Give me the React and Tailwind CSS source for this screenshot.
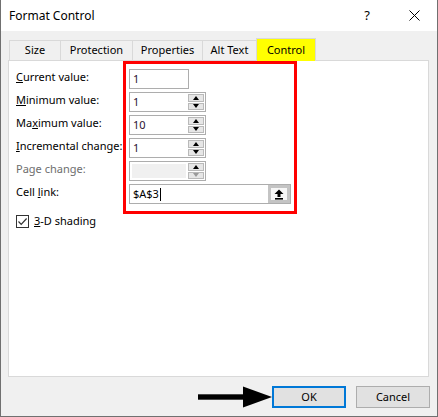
import React from 'react';

function UpArrow({dim}) {
    return (
        <span className={dim
            ? "block h-0 w-0 border-x-[3px] border-b-[4px] border-x-transparent border-b-[#9a9a9a]"
            : "block h-0 w-0 border-x-[3px] border-b-[4px] border-x-transparent border-b-black"}/>
    );
}

function DownArrow({dim}) {
    return (
        <span className={dim
            ? "block h-0 w-0 border-x-[3px] border-t-[4px] border-x-transparent border-t-[#9a9a9a]"
            : "block h-0 w-0 border-x-[3px] border-t-[4px] border-x-transparent border-t-black"}/>
    );
}

function Spinner({disabled}) {
    return (
        <div className="my-[1px] mr-[1px] flex w-[16px] flex-col gap-[1px]">
            <div className="flex flex-1 items-center justify-center border border-[#b9b9b9] bg-[#e6e6e6]">
                <UpArrow/>
            </div>
            <div className="flex flex-1 items-center justify-center border border-[#b9b9b9] bg-[#e6e6e6]">
                <DownArrow dim={disabled}/>
            </div>
        </div>
    );
}

function Row({label, children, disabled}) {
    return (
        <div className="flex h-[20px] items-start">
            <div className={disabled ? "w-[113px] leading-[15px] text-[#6d6d6d]" : "w-[113px] leading-[15px]"}>
                {label}
            </div>
            {children}
        </div>
    );
}

function SpinBox({value, disabled}) {
    return (
        <div className="flex h-[20px] w-[77px] border border-[#adadad] bg-white">
            {disabled
                ? <div className="m-[2px] flex-1 bg-[#f0f0f0]"/>
                : <div className="flex-1 pl-[3px] leading-[18px] text-[#2a1230]">{value}</div>}
            <Spinner disabled={disabled}/>
        </div>
    );
}

const tabs = [
    {name: 'Size', w: 'w-[51px]'},
    {name: 'Protection', w: 'w-[72px]'},
    {name: 'Properties', w: 'w-[70px]'},
    {name: 'Alt Text', w: 'w-[54px]'},
];

export default function App() {
    return (
        <div className="flex h-[417px] w-[438px] flex-col border-x border-b border-[#707070] font-['Noto_Sans',sans-serif] text-[11px] text-black">
            {/* title bar */}
            <div className="flex h-[31px] items-center bg-white pl-[8px]">
                <span className="flex-1 text-[12px]">Format Control</span>
                <span className="mr-[39px] text-[13px]">?</span>
                <svg width="11" height="11" viewBox="0 0 11 11" className="mr-[17px]">
                    <path d="M0.5 0.5 L10.5 10.5 M10.5 0.5 L0.5 10.5" stroke="#000" strokeWidth="1"/>
                </svg>
            </div>

            {/* body */}
            <div className="flex flex-1 flex-col bg-[#f0f0f0] pl-[7px] pr-[7px] pt-[7px]">
                {/* tabs */}
                <div className="flex h-[22px] items-end pl-[1px]">
                    {tabs.map(t => (
                        <div key={t.name}
                             className={`flex h-[20px] items-center justify-center border-l border-t border-[#d9d9d9] ${t.w}`}>
                            {t.name}
                        </div>
                    ))}
                    <div className="relative z-10 -mb-px flex h-[23px] w-[60px] items-center justify-center border-x border-t border-[#d9d9d9] bg-[#ffff00]">
                        Control
                    </div>
                </div>

                {/* panel */}
                <div className="relative mr-[1px] flex h-[317px] flex-col gap-[3px] border border-[#d9d9d9] bg-white pl-[7px] pt-[8px]">
                    <Row label={<><u>C</u>urrent value:</>}>
                        <div className="h-[20px] w-[60px] border border-[#adadad] pl-[3px] leading-[18px] text-[#2a1230]">1</div>
                    </Row>
                    <Row label={<><u>M</u>inimum value:</>}>
                        <SpinBox value="1"/>
                    </Row>
                    <Row label={<>Ma<u>x</u>imum value:</>}>
                        <SpinBox value="10"/>
                    </Row>
                    <Row label={<><u>I</u>ncremental change:</>}>
                        <SpinBox value="1"/>
                    </Row>
                    <Row label="Page change:" disabled>
                        <SpinBox disabled/>
                    </Row>
                    <Row label={<>Cell <u>l</u>ink:</>}>
                        <div className="flex h-[20px] w-[162px] border border-[#adadad] bg-white">
                            <div className="flex flex-1 items-center pl-[3px] leading-[18px]">
                                <span>$A$3</span>
                                <span className="ml-[1px] h-[13px] w-px bg-black"/>
                            </div>
                            <div className="flex w-[22px] items-center justify-center border-[3px] border-[#c4c4c4] bg-[#f7f7f7]">
                                <svg width="10" height="11" viewBox="0 0 10 11">
                                    <path d="M5 0.5 L9.5 5 L6.5 5 L6.5 8 L3.5 8 L3.5 5 L0.5 5 Z" fill="#000"/>
                                    <rect x="1" y="9" width="8" height="1.6" fill="#000"/>
                                </svg>
                            </div>
                        </div>
                    </Row>

                    <div className="mt-[6px] flex items-center gap-[5px]">
                        <div className="flex h-[13px] w-[13px] items-center justify-center border border-[#333] bg-white">
                            <svg width="11" height="11" viewBox="0 0 11 11">
                                <path d="M1.5 5.5 L4.2 8.3 L9.6 2.5" fill="none" stroke="#333" strokeWidth="1.2"/>
                            </svg>
                        </div>
                        <span><u>3</u>-D shading</span>
                    </div>

                    {/* red highlight annotation */}
                    <div className="pointer-events-none absolute left-[114px] top-0 h-[153px] w-[174px] border-[3px] border-[#ff0000]"/>
                </div>

                {/* buttons */}
                <div className="mt-[9px] flex items-center justify-end">
                    <svg width="74" height="22" viewBox="0 0 74 22">
                        <rect x="0" y="8.3" width="48" height="5.4" fill="#000"/>
                        <path d="M45 0.5 L74 11 L45 21.5 Z" fill="#000"/>
                    </svg>
                    <div className="flex h-[22px] w-[74px] items-center justify-center border-2 border-[#0078d7] bg-[#e1e1e1]">
                        OK
                    </div>
                    <div className="ml-[10px] flex h-[22px] w-[74px] items-center justify-center border border-[#adadad] bg-[#e1e1e1]">
                        Cancel
                    </div>
                </div>
            </div>
        </div>
    );
}
